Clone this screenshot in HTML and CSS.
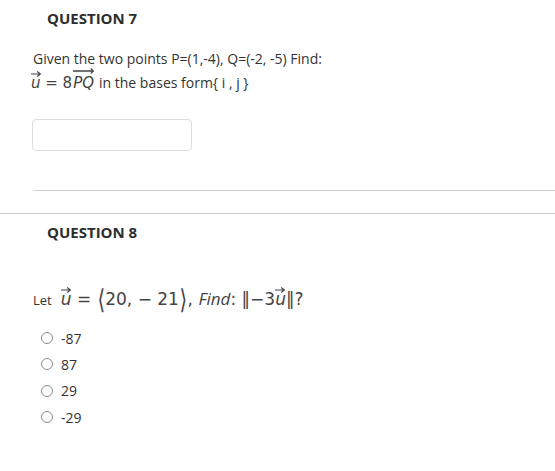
FILE: index.html
```html
<!DOCTYPE html>
<html>
<head>
<meta charset="utf-8">
<link rel="stylesheet" href="styles.css">
</head>
<body>
<section class="question q7">
  <h2 class="qtitle">QUESTION 7</h2>
  <p class="qtext">Given the two points P=(1,-4), Q=(-2, -5) Find:</p>
  <div class="mathline">
    <span class="math"><span class="vec">u<svg class="arrow" viewBox="0 0 10 6"><path d="M0 3H9.2M6.2 0.6L9.4 3L6.2 5.4" fill="none" stroke="#444" stroke-width="1.2"/></svg></span> = 8<span class="vec long"><i>PQ</i><svg class="arrow" viewBox="0 0 24 6" preserveAspectRatio="none"><path d="M0 3H23.2M20.4 0.6L23.5 3L20.4 5.4" fill="none" stroke="#444" stroke-width="1.3"/></svg></span></span>
    <span class="plain">in the bases form{ i , j }</span>
  </div>
  <input class="answer" type="text">
  <hr class="sep inner">
</section>
<hr class="sep full">
<section class="question q8">
  <h2 class="qtitle">QUESTION 8</h2>
  <div class="letline">
    <span class="small">Let</span>
    <span class="math big"><span class="vec">u<svg class="arrow" viewBox="0 0 10 6"><path d="M0 3H9.2M6.2 0.6L9.4 3L6.2 5.4" fill="none" stroke="#444" stroke-width="1.2"/></svg></span> = <span class="br">⟨</span>20, − 21<span class="br">⟩</span>, <i class="find">Find</i>: ‖−3<span class="vec">u<svg class="arrow" viewBox="0 0 10 6"><path d="M0 3H9.2M6.2 0.6L9.4 3L6.2 5.4" fill="none" stroke="#444" stroke-width="1.2"/></svg></span>‖?</span>
  </div>
  <ul class="options">
    <li><span class="radio"></span>-87</li>
    <li><span class="radio"></span>87</li>
    <li><span class="radio"></span>29</li>
    <li><span class="radio"></span>-29</li>
  </ul>
</section>
</body>
</html>
```
FILE: styles.css
```css
html, body {
  margin: 0;
  padding: 0;
  background: #fff;
}
body {
  font-family: "Open Sans", "Liberation Sans", sans-serif;
  color: #333;
}
.question {
  display: flex;
  flex-direction: column;
  align-items: flex-start;
}
.q7 {
  padding-top: 8px;
}
.qtitle {
  margin: 0 0 0 47px;
  font-size: 15px;
  font-weight: 700;
  line-height: 20px;
  color: #2e2e2e;
}
.qtext {
  margin: 22px 0 0 33px;
  font-size: 14px;
  line-height: 18px;
}
.mathline {
  margin: 3px 0 0 31px;
  line-height: 24px;
  display: flex;
  align-items: baseline;
  gap: 5px;
}
.math {
  font-family: "DejaVu Sans", "Liberation Sans", sans-serif;
  font-size: 15px;
  color: #444;
}
.plain {
  font-size: 14px;
}
.vec {
  position: relative;
  display: inline-block;
  font-style: italic;
}
.vec .arrow {
  position: absolute;
  left: 0;
  top: 0;
  width: 10px;
  height: 6px;
}
.vec.long {
  margin-left: 1px;
}
.vec.long .arrow {
  left: 0;
  width: 100%;
  top: -3px;
}
.br {
  display: inline-block;
  transform: scale(1.15, 1.6);
  margin: 0 1px;
}
.find {
  font-family: "Open Sans", sans-serif;
  font-style: italic;
}
.answer {
  margin: 24px 0 0 32px;
  width: 160px;
  height: 32px;
  box-sizing: border-box;
  border: 1px solid #dedede;
  border-radius: 4px;
  padding: 0;
  background: #fff;
}
.sep {
  border: 0;
  border-top: 1px solid #cfcfcf;
  margin: 0;
  align-self: stretch;
}
.sep.inner {
  margin: 39px 0 0 33px;
}
.sep.full {
  margin-top: 22px;
}
.q8 {
  padding-top: 8px;
}
.letline {
  margin: 44px 0 0 33px;
  line-height: 26px;
  display: flex;
  align-items: baseline;
  gap: 9px;
}
.small {
  font-size: 13px;
}
.math.big {
  font-size: 17px;
}
.math.big .vec .arrow {
  top: 1px;
}
.options {
  list-style: none;
  margin: 12px 0 0 0;
  padding: 0 0 0 41px;
}
.options li {
  display: flex;
  align-items: center;
  height: 26.3px;
  font-size: 14px;
  color: #333;
}
.radio {
  width: 12px;
  height: 12px;
  box-sizing: border-box;
  border: 1px solid #8a8a8a;
  border-radius: 50%;
  margin-right: 8px;
}
```
